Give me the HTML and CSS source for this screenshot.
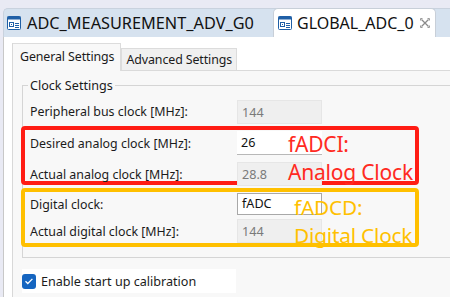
FILE: index.html
```html
<!DOCTYPE html>
<html>
<head>
<meta charset="utf-8">
<link rel="stylesheet" href="styles.css">
</head>
<body>
<div class="tabstrip">
  <div class="tab">
    <svg class="ticon" viewBox="0 0 14 14" width="14" height="14"><rect x="0.5" y="0.5" width="13" height="13" rx="1" fill="#fff" stroke="#1f5fa6"/><rect x="0.5" y="0.5" width="13" height="3" fill="#1f5fa6"/><rect x="2.5" y="6.5" width="4" height="4" fill="#fff" stroke="#1f5fa6"/><rect x="4" y="8" width="1" height="1" fill="#1f5fa6"/><path d="M8 7.5h4M8 9.5h4M8 11.5h4" stroke="#1f5fa6"/></svg>
    <span class="ttext">ADC_MEASUREMENT_ADV_G0</span>
  </div>
  <div class="tab active">
    <svg class="ticon" viewBox="0 0 14 14" width="14" height="14"><rect x="0.5" y="0.5" width="13" height="13" rx="1" fill="#fff" stroke="#1f5fa6"/><rect x="0.5" y="0.5" width="13" height="3" fill="#1f5fa6"/><rect x="2.5" y="6.5" width="4" height="4" fill="#fff" stroke="#1f5fa6"/><rect x="4" y="8" width="1" height="1" fill="#1f5fa6"/><path d="M8 7.5h4M8 9.5h4M8 11.5h4" stroke="#1f5fa6"/></svg>
    <span class="ttext">GLOBAL_ADC_0</span>
    <svg class="close" viewBox="0 0 10 10" width="10" height="10"><path d="M1.5 1.5L8.5 8.5M8.5 1.5L1.5 8.5" stroke="#8a8a8a" stroke-width="1.3"/><path d="M0.5 0.5h2M0.5 0.5v2M9.5 0.5h-2M9.5 0.5v2M0.5 9.5h2M0.5 9.5v-2M9.5 9.5h-2M9.5 9.5v-2" stroke="#9a9a9a" stroke-width="1"/></svg>
  </div>
  <div class="tabfill"></div>
</div>
<div class="editor">
  <div class="folder">
    <div class="subtabs">
      <div class="subtab active">General Settings</div>
      <div class="subtab">Advanced Settings</div>
    </div>
    <div class="panel">
      <fieldset class="group">
        <legend>Clock Settings</legend>
        <div class="row">
          <span class="label">Peripheral bus clock [MHz]:</span>
          <span class="field disabled">144</span>
        </div>
        <div class="annot red">
          <div class="row">
            <span class="label">Desired analog clock [MHz]:</span>
            <span class="field edit">26</span>
          </div>
          <div class="row">
            <span class="label">Actual analog clock [MHz]:</span>
            <span class="field disabled">28.8</span>
          </div>
          <div class="note">fADCI:<br>Analog Clock</div>
        </div>
        <div class="annot yellow">
          <div class="row">
            <span class="label">Digital clock:</span>
            <span class="field combo">fADC</span>
          </div>
          <div class="row">
            <span class="label">Actual digital clock [MHz]:</span>
            <span class="field disabled">144</span>
          </div>
          <div class="note">fADCD:<br>Digital Clock</div>
        </div>
      </fieldset>
      <div class="check">
        <span class="box"><svg viewBox="0 0 14 14" width="14" height="14"><path d="M3.5 7.2l2.3 2.3 4.6-4.6" fill="none" stroke="#fff" stroke-width="1.3"/></svg></span>
        <span>Enable start up calibration</span>
      </div>
    </div>
  </div>
</div>
</body>
</html>
```

FILE: styles.css
```css
html, body {
  margin: 0;
  padding: 0;
  overflow: hidden;
}
body {
  width: 450px;
  height: 297px;
  background: #e9eaf4;
  font-family: "Noto Sans", "Liberation Sans", sans-serif;
  color: #1b1b1b;
}
.tabstrip {
  display: flex;
  margin: 8px 0 0 3px;
  height: 29px;
  background: #d6e2ef;
  border-radius: 5px 0 0 0;
  border-top: 1px solid #c9d2de;
  border-left: 1px solid #c9d2de;
  box-sizing: border-box;
}
.tab {
  display: flex;
  align-items: center;
  height: 28px;
  padding-left: 3px;
  width: 269px;
  box-sizing: border-box;
}
.tab.active {
  width: 163px;
  background: #fff;
  border: 1px solid #c8cfd8;
  border-bottom: none;
  border-radius: 5px 5px 0 0;
  margin-top: -1px;
  height: 29px;
  padding-left: 4px;
}
.tabfill { flex: 1; }
.ticon { flex: none; }
.ttext {
  font-size: 16.3px;
  margin-left: 6px;
  color: #111;
}
.active .ttext { font-size: 16px; margin-left: 5px; }
.close { margin-left: 6px; }
.editor {
  margin-left: 3px;
  background: #fff;
  border-left: 1px solid #c8c8c8;
  padding: 6px 0 0 8px;
  height: 260px;
  box-sizing: border-box;
}
.folder {
  border-left: 1px solid #d8d8d8;
  height: 100%;
}
.subtabs {
  display: flex;
  align-items: flex-end;
  height: 27px;
  border-bottom: 1px solid #dadada;
}
.subtab {
  font-size: 12.4px;
  letter-spacing: -0.1px;
  height: 22px;
  line-height: 21px;
  padding: 0 4px;
  background: #f0f0f0;
  border: 1px solid #dcdcdc;
  border-bottom: none;
  box-sizing: border-box;
  white-space: nowrap;
}
.subtab.active {
  height: 28px;
  line-height: 26px;
  background: #f8f8f8;
  padding: 0 6px 0 7px;
  margin-bottom: -1px;
  border-left: none;
}
.panel {
  background: #f8f8f8;
  padding: 6px 0 0 9px;
  height: 230px;
  box-sizing: border-box;
}
.group {
  margin: 0;
  width: 470px;
  padding: 5px 0 10px 7px;
  border: 1px solid #d5d5d5;
  box-sizing: border-box;
}
.group legend {
  font-size: 12.6px;
  padding: 0 2px;
  margin-left: -2px;
  line-height: 17px;
}
.row {
  display: grid;
  grid-template-columns: 207px 85px;
  align-items: center;
  height: 25px;
  font-size: 12.4px;
  white-space: nowrap;
}
.field {
  height: 24px;
  line-height: 24px;
  padding-left: 4px;
  box-sizing: border-box;
  font-size: 12.6px;
}
.disabled {
  background: #efefef;
  border: 1px solid #e6e6e6;
  color: #7a7a7a;
}
.edit {
  background: #fff;
  border-bottom: 1px solid #b8b8b8;
  color: #111;
}
.combo {
  background: #fff;
  border: 1px solid #a8a8a8;
  height: 22px;
  line-height: 20px;
  color: #111;
}
.annot {
  position: relative;
  width: 398px;
  height: 59px;
  margin-left: -9px;
  padding: 1px 0 0 5px;
  border: 4px solid;
  border-radius: 4px;
  box-sizing: border-box;
  display: flex;
  flex-direction: column;
  gap: 7px;
}
.annot.red {
  border-color: #ff1c14;
  margin-top: 2px;
}
.annot.yellow {
  border-color: #ffc000;
  margin-top: 3px;
  gap: 4px;
}
.note {
  position: absolute;
  top: 0;
  left: 263px;
  font-size: 21px;
  letter-spacing: -0.2px;
  line-height: 28px;
  white-space: nowrap;
}
.red .note { color: #ff2a22; }
.yellow .note { color: #ffc000; left: 269px; top: 1px; font-size: 20.8px; }
.check {
  display: flex;
  align-items: center;
  gap: 5px;
  margin: 11px 0 0 0;
  width: 214px;
  height: 24px;
  background: #fff;
  font-size: 12.6px;
  white-space: nowrap;
}
.box {
  width: 14px;
  height: 15px;
  background: #1565c0;
  border-radius: 3px;
  display: flex;
  align-items: center;
  justify-content: center;
}
```
